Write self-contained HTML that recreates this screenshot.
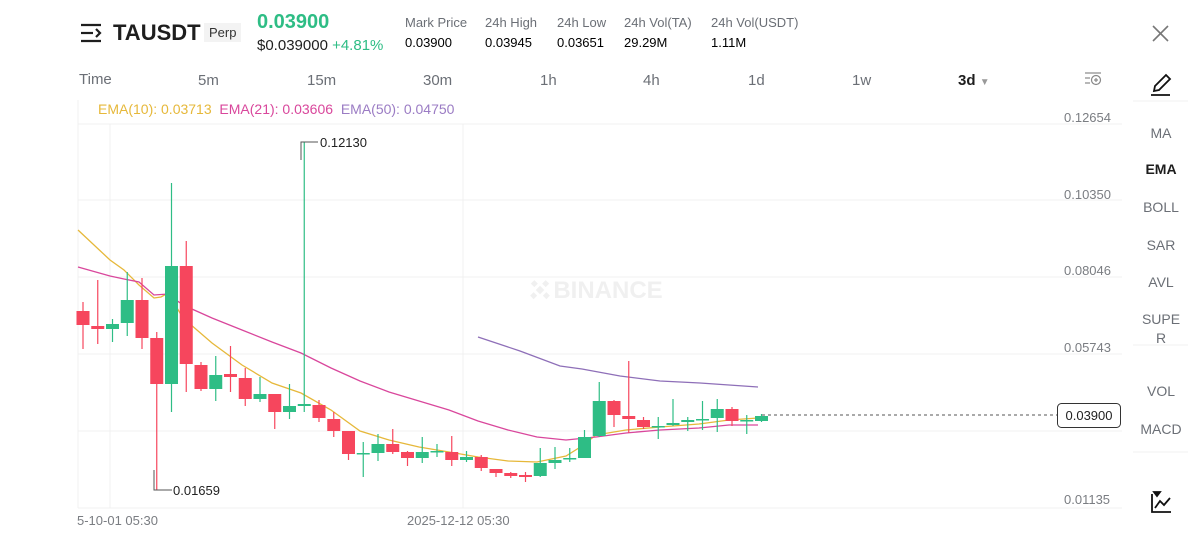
<!DOCTYPE html>
<html><head><meta charset="utf-8"><style>
body{margin:0;width:1200px;height:553px;background:#fff;font-family:"Liberation Sans",sans-serif;overflow:hidden;position:relative}
.a{position:absolute;white-space:nowrap}
.g{color:#6b6f76}
</style></head><body>
<svg class="a" style="left:0;top:0" width="1200" height="553">
<g stroke="#f1f1f1" stroke-width="1">
<line x1="78" y1="124" x2="1122" y2="124"/><line x1="78" y1="200" x2="1122" y2="200"/><line x1="78" y1="277" x2="1122" y2="277"/><line x1="78" y1="354" x2="1122" y2="354"/><line x1="78" y1="431" x2="1122" y2="431"/><line x1="78" y1="508" x2="1122" y2="508"/>
<line x1="78" y1="100" x2="78" y2="508"/><line x1="110" y1="124" x2="110" y2="508"/><line x1="463" y1="124" x2="463" y2="508"/>
<line x1="1133" y1="101" x2="1188" y2="101"/><line x1="1133" y1="345" x2="1188" y2="345"/><line x1="1133" y1="452" x2="1188" y2="452"/>
</g>
<text x="608" y="298" text-anchor="middle" font-size="24" font-weight="bold" fill="#f0f0f0" font-family="Liberation Sans">BINANCE</text>
<g fill="#f0f0f0" transform="translate(540,290) rotate(45)"><rect x="-3" y="-3" width="6" height="6"/><rect x="-11" y="-3" width="5" height="5"/><rect x="6" y="-3" width="5" height="5"/><rect x="-3" y="-11" width="5" height="5"/><rect x="-3" y="6" width="5" height="5"/></g>
<polyline fill="none" stroke="#e6b83a" stroke-width="1.3" points="78,230 110,260 124,270 139,285 154,298 161,297 168,293 183,318 212,343 242,365 272,383 301,393 331,410 360,431 389,440 419,447 449,452 478,457 508,461 537,462 566,456 582,446 596,435 626,430 660,427 699,424 729,420 758,418"/>
<polyline fill="none" stroke="#d9479c" stroke-width="1.3" points="78,267 110,276 124,279 139,282 154,295 168,294 183,305 212,318 242,330 272,342 301,353 331,368 360,381 389,392 419,401 449,410 478,421 508,430 537,437 566,440 596,437 626,433 660,430 699,428 729,425 758,425"/>
<polyline fill="none" stroke="#8e6fb8" stroke-width="1.3" points="478,337 520,351 560,366 582,369 620,376 660,381 700,383 758,387"/>
<g id="c"></g>
<polyline fill="none" stroke="#555" stroke-width="1" points="154,470 154,490 172,490"/>
<polyline fill="none" stroke="#555" stroke-width="1" points="301,160 301,142 318,142"/>
<text x="173" y="495" font-size="13" fill="#222">0.01659</text>
<text x="320" y="147" font-size="13" fill="#222">0.12130</text>
<line x1="762" y1="415" x2="1057" y2="415" stroke="#555" stroke-dasharray="3,3"/>
<rect x="1057.5" y="403.5" width="63" height="24" rx="4" fill="#fff" stroke="#333"/>
<text x="1089" y="420" text-anchor="middle" font-size="13" fill="#222">0.03900</text>
<g font-size="13" fill="#7a7d82"><text x="1064" y="122">0.12654</text><text x="1064" y="199">0.10350</text><text x="1064" y="275">0.08046</text><text x="1064" y="352">0.05743</text><text x="1064" y="504">0.01135</text>
<text x="77" y="525">5-10-01 05:30</text><text x="407" y="525">2025-12-12 05:30</text></g>
<g stroke="#1e1e1e" stroke-width="2.2" fill="none"><line x1="81" y1="25" x2="101" y2="25"/><line x1="81" y1="33" x2="93" y2="33"/><line x1="81" y1="41" x2="101" y2="41"/><polyline points="96,29 100,33 96,37"/></g>
<g stroke="#777" stroke-width="1.6"><line x1="1153" y1="26" x2="1168" y2="41"/><line x1="1168" y1="26" x2="1153" y2="41"/></g>
<g stroke="#111" stroke-width="1.8" fill="none"><path d="M1155,86 L1166,75 L1170,79 L1159,90 L1154,91 Z"/><line x1="1151" y1="95" x2="1170" y2="95"/></g>
<g stroke="#111" stroke-width="1.8" fill="none"><polyline points="1152,494 1152,512 1171,512"/><polyline points="1155,508 1160,501 1164,505 1170,498"/><polygon points="1154,492 1160,492 1157,496" fill="#111"/></g>
<g stroke="#888" stroke-width="1.2" fill="none"><line x1="1085" y1="73" x2="1101" y2="73"/><line x1="1085" y1="78" x2="1090" y2="78"/><line x1="1085" y1="83" x2="1090" y2="83"/><circle cx="1096" cy="80" r="4.5"/><line x1="1094" y1="80" x2="1098" y2="80"/><line x1="1096" y1="78" x2="1096" y2="82"/></g>
</svg>
<script>
var d=[["r",311,325,302,349],["r",326,329,280,344],["g",324,329,319,342],["g",300,323,272,336],["r",300,338,278,349],["r",338,384,332,490],["g",266,384,183,412],["r",266,364,241,392],["r",365,389,362,391],["g",375,389,356,401],["r",374,377,346,392],["r",378,399,368,406],["g",394,399,377,402],["r",394,412,394,429],["g",406,412,384,419],["g",404,406,142,412],["r",405,418,400,422],["r",419,431,412,437],["r",431,454,431,460],["g",453,454,442,477],["g",444,453,434,461],["r",444,452,429,454],["r",452,458,451,466],["g",452,458,437,463],["g",451,452,444,457],["r",452,460,436,466],["g",457,460,451,462],["r",457,468,455,471],["r",469,473,469,477],["r",473,476,472,478],["r",475,477,472,482],["g",463,476,448,477],["g",460,463,447,469],["g",458,459,448,462],["g",437,458,430,458],["g",401,436,382,437],["r",401,415,400,427],["r",416,419,361,433],["r",420,427,417,429],["g",426,427,417,439],["g",423,425,399,426],["g",420,422,417,431],["g",419,420,401,430],["g",409,418,399,432],["r",409,421,407,426],["g",420,421,415,434],["g",416,421,414,422]];
var s="";d.forEach(function(c,i){var x=83+14.75*i,col=c[0]=="g"?"#2ebd85":"#f6465d",h=Math.max(c[2]-c[1],1.5);s+='<line x1="'+x+'" y1="'+c[3]+'" x2="'+x+'" y2="'+c[4]+'" stroke="'+col+'" stroke-width="1.2"/><rect x="'+(x-6.5)+'" y="'+c[1]+'" width="13" height="'+h+'" fill="'+col+'"/>';});
document.getElementById("c").innerHTML=s;
</script>
<div class="a" style="left:113px;top:20px;font-size:22px;font-weight:bold;color:#1e1e1e">TAUSDT</div>
<div class="a" style="left:204px;top:23px;padding:2px 5px;background:#f3f3f3;font-size:13px;color:#333">Perp</div>
<div class="a" style="left:257px;top:11px;font-size:20px;font-weight:bold;color:#2ebd85">0.03900</div>
<div class="a" style="left:257px;top:37px;font-size:15px;color:#1e1e1e">$0.039000 <span style="color:#2ebd85">+4.81%</span></div>
<div class="a g" style="left:405px;top:15px;font-size:13px">Mark Price</div><div class="a" style="left:405px;top:35px;font-size:13px">0.03900</div>
<div class="a g" style="left:485px;top:15px;font-size:13px">24h High</div><div class="a" style="left:485px;top:35px;font-size:13px">0.03945</div>
<div class="a g" style="left:557px;top:15px;font-size:13px">24h Low</div><div class="a" style="left:557px;top:35px;font-size:13px">0.03651</div>
<div class="a g" style="left:624px;top:15px;font-size:13px">24h Vol(TA)</div><div class="a" style="left:624px;top:35px;font-size:13px">29.29M</div>
<div class="a g" style="left:711px;top:15px;font-size:13px">24h Vol(USDT)</div><div class="a" style="left:711px;top:35px;font-size:13px">1.11M</div>
<div class="a g" style="top:71px;font-size:15px;left:79px">Time</div>
<div class="a g" style="top:72px;font-size:15px;left:198px">5m</div>
<div class="a g" style="top:72px;font-size:15px;left:307px">15m</div>
<div class="a g" style="top:72px;font-size:15px;left:423px">30m</div>
<div class="a g" style="top:72px;font-size:15px;left:540px">1h</div>
<div class="a g" style="top:72px;font-size:15px;left:643px">4h</div>
<div class="a g" style="top:72px;font-size:15px;left:748px">1d</div>
<div class="a g" style="top:72px;font-size:15px;left:852px">1w</div>
<div class="a" style="top:72px;font-size:15px;left:958px;font-weight:bold;color:#1e1e1e">3d <span style="color:#999;font-size:10px">▼</span></div>
<div class="a" style="left:98px;top:101px;font-size:14px"><span style="color:#e6b83a">EMA(10): 0.03713</span>&nbsp;&nbsp;<span style="color:#d9479c">EMA(21): 0.03606</span>&nbsp;&nbsp;<span style="color:#9b7cc4">EMA(50): 0.04750</span></div>
<div class="a g" style="left:1134px;width:54px;text-align:center;font-size:14px;top:124px;line-height:18px">MA</div>
<div class="a" style="left:1134px;width:54px;text-align:center;font-size:14px;top:161px;font-weight:bold;color:#1e1e1e">EMA</div>
<div class="a g" style="left:1134px;width:54px;text-align:center;font-size:14px;top:199px">BOLL</div>
<div class="a g" style="left:1134px;width:54px;text-align:center;font-size:14px;top:237px">SAR</div>
<div class="a g" style="left:1134px;width:54px;text-align:center;font-size:14px;top:274px">AVL</div>
<div class="a g" style="left:1134px;width:54px;text-align:center;font-size:14px;top:311px">SUPE</div>
<div class="a g" style="left:1134px;width:54px;text-align:center;font-size:14px;top:330px">R</div>
<div class="a g" style="left:1134px;width:54px;text-align:center;font-size:14px;top:383px">VOL</div>
<div class="a g" style="left:1134px;width:54px;text-align:center;font-size:14px;top:421px">MACD</div>
<div class="a g" style="left:1134px;width:54px;text-align:center;font-size:14px;top:446px;height:6px;overflow:hidden;line-height:32px">RSI</div>
</body></html>
